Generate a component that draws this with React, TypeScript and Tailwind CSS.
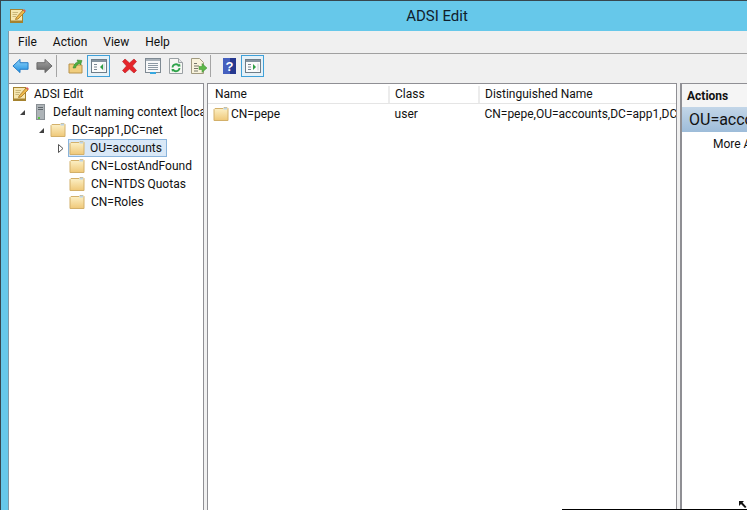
const font = "font-['Roboto','Liberation_Sans',sans-serif]";

function Folder() {
  return (
    <svg width="16" height="16" viewBox="0 0 16 16" className="shrink-0">
      <defs>
        <linearGradient id="fld" x1="0" y1="0" x2="0" y2="1">
          <stop offset="0" stopColor="#fdf3cc" />
          <stop offset="1" stopColor="#efc878" />
        </linearGradient>
      </defs>
      <path d="M1 3.5 L2 2.5 H10 L11 1.5 H14 L15 2.5 V14.5 H1 Z" fill="url(#fld)" stroke="#d3b06a" strokeWidth="1" />
      <path d="M10.5 2.5 L11.5 1.5 H14 V3.5 H10.5 Z" fill="#bcd3e6" />
    </svg>
  );
}

function AppIcon() {
  return (
    <svg width="17" height="16" viewBox="0 0 17 16" className="shrink-0">
      <rect x="0.5" y="1.5" width="12" height="13" fill="#f6e7b0" stroke="#a5822f" />
      <rect x="0.5" y="12.5" width="12" height="2" fill="#a5822f" />
      <path d="M2.5 4.5H8M2.5 6.5H7M2.5 8.5H6" stroke="#c9b67a" />
      <path d="M6 10 L13 2 L15 4 L8 11 L5.5 11.5 Z" fill="#eeb94a" stroke="#9a6a1d" strokeWidth="0.7" />
      <path d="M13 2 L14 1 L16 3 L15 4 Z" fill="#e25b5b" />
    </svg>
  );
}

function ArrowLeft() {
  return (
    <svg width="17" height="16" viewBox="0 0 18 16" className="-ml-[2px]">
      <defs>
        <linearGradient id="bl" x1="0" y1="0" x2="0" y2="1">
          <stop offset="0" stopColor="#8fd4fa" />
          <stop offset="1" stopColor="#1f8fe0" />
        </linearGradient>
      </defs>
      <path d="M1 8 L8.5 1 V4.5 H17 V11.5 H8.5 V15 Z" fill="url(#bl)" stroke="#1f78c4" strokeWidth="1" />
    </svg>
  );
}

function ArrowRight() {
  return (
    <svg width="17" height="16" viewBox="0 0 18 16">
      <defs>
        <linearGradient id="gr" x1="0" y1="0" x2="0" y2="1">
          <stop offset="0" stopColor="#a6a6a6" />
          <stop offset="1" stopColor="#626262" />
        </linearGradient>
      </defs>
      <path d="M17 8 L9.5 1 V4.5 H1 V11.5 H9.5 V15 Z" fill="url(#gr)" stroke="#686868" strokeWidth="1" />
    </svg>
  );
}

function UpFolder() {
  return (
    <svg width="16" height="16" viewBox="0 0 16 16">
      <path d="M1 6 H6 L7 7 H14 V15 H1 Z" fill="#f0cd7d" stroke="#b8924a" />
      <path d="M5 10 C6 6 8 4 10 4 L9 2 L14 2.5 L12.5 7 L11.5 5.5 C9.5 6 8 8 7.5 10 Z" fill="#4fae3f" stroke="#2e7d28" strokeWidth="0.5" />
    </svg>
  );
}

function PaneIcon({ right }: { right?: boolean }) {
  return (
    <svg width="16" height="14" viewBox="0 0 16 14">
      <rect x="0.5" y="0.5" width="15" height="13" fill="#fbfbfb" stroke="#6f7d88" />
      <rect x="1" y="1" width="14" height="2" fill="#8494a0" />
      <path d="M3 5.5H6M3 8H6M3 10.5H6" stroke="#7a8792" />
      {right ? (
        <path d="M8 5 L11 8 L8 11 Z" fill="#2f9e44" />
      ) : (
        <path d="M12 5 L9 8 L12 11 Z" fill="#2f9e44" />
      )}
      <path d="M13 4.5V11.5" stroke="#c8ced3" />
    </svg>
  );
}

function DeleteIcon() {
  return (
    <svg width="17" height="16" viewBox="0 0 16 16">
      <path d="M1 3.5 L3.5 1 L8 5 L12.5 1 L15 3.5 L11 8 L15 12.5 L12.5 15 L8 11 L3.5 15 L1 12.5 L5 8 Z" fill="#e5252a" stroke="#b51d21" strokeWidth="0.6" />
    </svg>
  );
}

function PropsIcon() {
  return (
    <svg width="16" height="16" viewBox="0 0 16 16">
      <rect x="0.5" y="0.5" width="15" height="14" fill="#f7f8f9" stroke="#7f8a93" />
      <rect x="1" y="1" width="14" height="2" fill="#a8b2ba" />
      <path d="M3 5.5H13M3 7.5H13M3 9.5H13M3 11.5H13" stroke="#8b98a3" />
      <rect x="5" y="14" width="6" height="2" fill="#37a8e0" />
    </svg>
  );
}

function RefreshIcon() {
  return (
    <svg width="14" height="16" viewBox="0 0 14 16">
      <path d="M0.5 0.5 H9.5 L13.5 4.5 V15.5 H0.5 Z" fill="#f7f7f4" stroke="#9aa0a4" />
      <path d="M9.5 0.5 V4.5 H13.5" fill="#e1e3e5" stroke="#9aa0a4" />
      <path d="M3.5 9.5 A3.5 3.5 0 0 1 10 8 M10.5 10 A3.5 3.5 0 0 1 4 11.5" fill="none" stroke="#2fa34a" strokeWidth="1.8" />
      <path d="M8.5 8.5 L11.5 8.5 L11 5.5 Z M5.5 11 L2.5 11 L3 14 Z" fill="#2fa34a" />
    </svg>
  );
}

function ExportIcon() {
  return (
    <svg width="16" height="16" viewBox="0 0 16 16">
      <path d="M0.5 0.5 H8.5 L12.5 4.5 V15.5 H0.5 Z" fill="#f8f3dc" stroke="#a19a80" />
      <path d="M3 5.5H6M3 8H8M3 10.5H7M3 13H7" stroke="#77766a" />
      <path d="M8 8.5 H11 V5.5 L16 10 L11 14.5 V11.5 H8 Z" fill="#5cb848" stroke="#3f8f33" strokeWidth="0.5" />
    </svg>
  );
}

function HelpIcon() {
  return (
    <svg width="13" height="16" viewBox="0 0 13 16">
      <rect width="13" height="16" fill="#26388f" />
      <rect x="0" y="0" width="7" height="16" fill="#4560bf" />
      <text x="6.5" y="13" fontSize="13" fontWeight="700" fill="#fff" textAnchor="middle" fontFamily="Liberation Sans">?</text>
    </svg>
  );
}

function ServerIcon() {
  return (
    <svg width="9" height="16" viewBox="0 0 9 16" className="shrink-0">
      <rect width="9" height="16" fill="#8a9095" />
      <rect x="1" y="1" width="7" height="14" fill="#aeb4b8" />
      <path d="M2 3.5H7M2 5.5H7" stroke="#5f666b" />
      <rect x="2" y="13" width="2" height="2" fill="#59c145" />
    </svg>
  );
}

function Expanded() {
  return (
    <svg width="7" height="7" viewBox="0 0 7 7" className="shrink-0">
      <path d="M6 1 V6 H1 Z" fill="#404040" />
    </svg>
  );
}

function ToolBtn({ children, active }: { children: React.ReactNode; active?: boolean }) {
  return (
    <div
      className={
        active
          ? "flex h-[22px] w-[23px] items-center justify-center border border-[#3fa0d8] bg-[#e5f1f8]"
          : "flex h-[22px] w-[23px] items-center justify-center"
      }
    >
      {children}
    </div>
  );
}

function Sep() {
  return <div className="h-[22px] w-px bg-[#a5a5a5]" />;
}

export default function App() {
  return (
    <div className={`${font} relative flex h-[510px] w-[747px] flex-col overflow-hidden border-t border-l border-[#37474f] bg-[#66c8ea] text-xs text-[#111]`}>
      {/* title bar */}
      <div className="relative flex h-[30px] shrink-0 items-center pl-[9px]">
        <AppIcon />
        <span className="absolute inset-x-0 top-[5px] pl-[126px] text-center text-[15px] leading-5 text-[#10202c]">ADSI Edit</span>
      </div>

      <div className="ml-[7px] flex min-h-0 flex-1 flex-col border-l border-[#7f9aa8] bg-[#f0f0f0]">
        {/* menu */}
        <div className="flex h-[23px] shrink-0 items-center gap-[16px] border-b border-[#a0a0a0] pl-[9px] text-[12px]">
          <span>File</span>
          <span>Action</span>
          <span>View</span>
          <span>Help</span>
        </div>

        {/* toolbar */}
        <div className="flex h-[29px] shrink-0 items-start pl-[1px] pt-[1px]">
          <ToolBtn><ArrowLeft /></ToolBtn>
          <ToolBtn><ArrowRight /></ToolBtn>
          <Sep />
          <div className="w-[7px]" />
          <ToolBtn><UpFolder /></ToolBtn>
          <ToolBtn active><PaneIcon /></ToolBtn>
          <div className="w-[8px]" />
          <ToolBtn><DeleteIcon /></ToolBtn>
          <ToolBtn><PropsIcon /></ToolBtn>
          <ToolBtn><RefreshIcon /></ToolBtn>
          <ToolBtn><ExportIcon /></ToolBtn>
          <Sep />
          <div className="w-[7px]" />
          <ToolBtn><HelpIcon /></ToolBtn>
          <ToolBtn active><PaneIcon right /></ToolBtn>
        </div>

        {/* panes */}
        <div className="flex min-h-0 flex-1 gap-[3px]">
          {/* tree */}
          <div className="w-[195px] shrink-0 overflow-hidden border-t border-r border-[#8f8f94] bg-white pt-[1px]">
            <div className="flex h-[18px] items-center gap-[4px] pl-[4px]">
              <AppIcon />
              <span>ADSI Edit</span>
            </div>
            <div className="flex h-[18px] items-center whitespace-nowrap pl-[10px]">
              <Expanded />
              <span className="ml-[10px]"><ServerIcon /></span>
              <span className="ml-[8px]">Default naming context [localhost]</span>
            </div>
            <div className="flex h-[18px] items-center whitespace-nowrap pl-[29px]">
              <Expanded />
              <span className="ml-[5px]"><Folder /></span>
              <span className="ml-[6px]">DC=app1,DC=net</span>
            </div>
            <div className="flex h-[18px] items-center whitespace-nowrap pl-[49px]">
              <svg width="6" height="9" viewBox="0 0 6 9" className="shrink-0">
                <path d="M0.5 0.5 L5 4.5 L0.5 8.5 Z" fill="#fff" stroke="#555" />
              </svg>
              <div className="ml-[4px] flex h-[18px] w-[99px] items-center gap-[5px] border border-[#8ab4dc] bg-[#d9e8f7]">
                <Folder />
                <span>OU=accounts</span>
              </div>
            </div>
            {["CN=LostAndFound", "CN=NTDS Quotas", "CN=Roles"].map((label) => (
              <div key={label} className="flex h-[18px] items-center gap-[6px] whitespace-nowrap pl-[60px]">
                <Folder />
                <span>{label}</span>
              </div>
            ))}
          </div>

          {/* list */}
          <div className="w-[470px] shrink-0 overflow-hidden border border-b-0 border-[#8f8f94] bg-white">
            <div className="flex h-[20px] items-center whitespace-nowrap border-b border-[#e5e5e5] pt-[2px]">
              <div className="w-[182px] border-r-2 border-[#ececec] pl-[7px] leading-[17px]">Name</div>
              <div className="w-[90px] border-r-2 border-[#ececec] pl-[5px] leading-[17px]">Class</div>
              <div className="pl-[5px] leading-[17px]">Distinguished Name</div>
            </div>
            <div className="flex h-[19px] items-center whitespace-nowrap pt-[1px]">
              <div className="flex w-[182px] items-center gap-[2px] pl-[5px]">
                <Folder />
                <span>CN=pepe</span>
              </div>
              <div className="w-[90px] pl-[5px]">user</div>
              <div className="w-[197px] overflow-hidden pl-[5px]">CN=pepe,OU=accounts,DC=app1,DC=net</div>
            </div>
          </div>

          {/* actions */}
          <div className="min-w-0 flex-1 overflow-hidden border-t border-l-2 border-[#8f8f94] bg-white">
            <div className="flex h-[23px] items-center whitespace-nowrap bg-[#f5f5f5] pl-[5px] pt-[1px] font-bold">Actions</div>
            <div className="flex h-[25px] items-center whitespace-nowrap bg-gradient-to-b from-[#c3d6e8] to-[#9dbcd9] pl-[7px] pt-[1px] text-[16px]">OU=accounts</div>
            <div className="whitespace-nowrap pl-[31px] pt-[3px] leading-[18px]">More Actions</div>
          </div>
        </div>
      </div>

      {/* stray capture marks at the bottom right */}
      <div className="absolute bottom-0 right-0 h-px w-[185px] bg-black" />
      <svg width="8" height="8" viewBox="0 0 8 8" className="absolute bottom-[1px] right-0">
        <path d="M0 0 H5 L3.5 1.5 L7.5 6 L6 7 L2 3 L0 5 Z" fill="#111" />
      </svg>
    </div>
  );
}
